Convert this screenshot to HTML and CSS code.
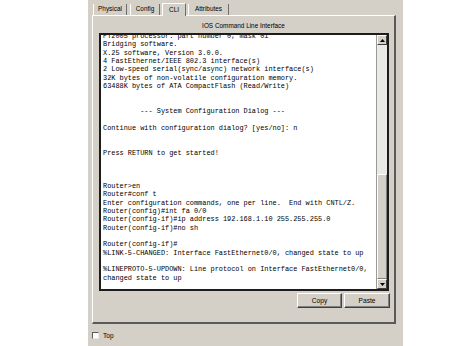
FILE: index.html
```html
<!DOCTYPE html>
<html>
<head>
<meta charset="utf-8">
<link rel="stylesheet" href="styles.css">
</head>
<body>
<div class="window">
  <div class="tabs">
    <div class="tab tab-physical">Physical</div>
    <div class="tab tab-config">Config</div>
    <div class="tab tab-cli active">CLI</div>
    <div class="tab tab-attr">Attributes</div>
  </div>
  <div class="panel">
    <div class="title">IOS Command Line Interface</div>
    <div class="terminal">
      <div class="screen"><pre class="text">PT2005 processor: part number 0, mask 01
Bridging software.
X.25 software, Version 3.0.0.
4 FastEthernet/IEEE 802.3 interface(s)
2 Low-speed serial(sync/async) network interface(s)
32K bytes of non-volatile configuration memory.
63488K bytes of ATA CompactFlash (Read/Write)


         --- System Configuration Dialog ---

Continue with configuration dialog? [yes/no]: n


Press RETURN to get started!



Router&gt;en
Router#conf t
Enter configuration commands, one per line.  End with CNTL/Z.
Router(config)#int fa 0/0
Router(config-if)#ip address 192.168.1.10 255.255.255.0
Router(config-if)#no sh

Router(config-if)#
%LINK-5-CHANGED: Interface FastEthernet0/0, changed state to up

%LINEPROTO-5-UPDOWN: Line protocol on Interface FastEthernet0/0,
changed state to up</pre></div>
      <div class="scrollbar">
        <div class="sb-btn"><svg width="5" height="3" viewBox="0 0 5 3"><polygon points="2.5,0 5,3 0,3" fill="#000"/></svg></div>
        <div class="track"><div class="thumb"></div></div>
        <div class="sb-btn"><svg width="5" height="3" viewBox="0 0 5 3"><polygon points="0,0 5,0 2.5,3" fill="#000"/></svg></div>
      </div>
    </div>
    <div class="actions">
      <div class="btn btn-copy">Copy</div>
      <div class="btn btn-paste">Paste</div>
    </div>
  </div>
  <div class="footer">
    <span class="checkbox"></span>
    <span class="label">Top</span>
  </div>
</div>
</body>
</html>
```
FILE: styles.css
```css
html, body {
  margin: 0;
  padding: 0;
  background: #ffffff;
}
body {
  font-family: "Liberation Sans", Arial, sans-serif;
  font-size: 6.4px;
  color: #000;
}
.window {
  margin-left: 88px;
  width: 315px;
  height: 346px;
  background: #d4d0c8;
  display: flex;
  flex-direction: column;
}
.tabs {
  height: 15px;
  display: flex;
  align-items: flex-end;
  padding-left: 5px;
  gap: 2px;
  box-sizing: border-box;
}
.tab {
  height: 11px;
  box-sizing: border-box;
  border-left: 1px solid #ffffff;
  border-right: 1px solid #6e6e6e;
  display: flex;
  align-items: center;
  justify-content: center;
  line-height: 1;
}
.tab-physical { width: 34px; }
.tab-config { width: 30px; margin-left: 1px; }
.tab-cli { width: 24px; }
.tab-attr { width: 41px; }
.tab.active {
  height: 13px;
  border-top: 1px solid #ffffff;
  position: relative;
  top: 1px;
  background: #d4d0c8;
  z-index: 1;
}
.panel {
  margin-left: 4px;
  width: 304px;
  height: 309px;
  box-sizing: border-box;
  border-top: 1px solid #ffffff;
  border-left: 1px solid #ffffff;
  border-right: 2px solid #5a5a5a;
  border-bottom: 2px solid #5a5a5a;
  display: flex;
  flex-direction: column;
}
.title {
  height: 15px;
  padding-top: 2px;
  line-height: 15px;
  text-align: center;
}
.terminal {
  margin: 0 5px 0 6px;
  height: 258px;
  box-sizing: border-box;
  border: 2px solid #1c1c1c;
  background: #ffffff;
  display: flex;
}
.screen {
  flex: 1;
  overflow: hidden;
  display: flex;
  flex-direction: column;
  justify-content: flex-end;
  padding: 0 0 7px 2px;
}
.text {
  margin: 0;
  font-family: "Liberation Mono", "Courier New", monospace;
  font-size: 6.9px;
  line-height: 8.33px;
  color: #000;
  white-space: pre;
}
.scrollbar {
  width: 10px;
  display: flex;
  flex-direction: column;
  background: #ebe9e5;
  border-left: 1px solid #9a9a9a;
}
.sb-btn {
  height: 10px;
  box-sizing: border-box;
  background: #d4d0c8;
  border-top: 1px solid #ffffff;
  border-left: 1px solid #ffffff;
  border-right: 1px solid #404040;
  border-bottom: 1px solid #404040;
  display: flex;
  align-items: center;
  justify-content: center;
}
.sb-btn svg { display: block; }
.track {
  flex: 1;
  display: flex;
  flex-direction: column;
  justify-content: flex-end;
}
.thumb {
  height: 105px;
  box-sizing: border-box;
  background: #d4d0c8;
  border-top: 1px solid #ffffff;
  border-left: 1px solid #ffffff;
  border-right: 1px solid #808080;
  border-bottom: 1px solid #808080;
}
.actions {
  margin-top: 2px;
  height: 15px;
  display: flex;
  justify-content: flex-end;
  gap: 2px;
  padding-right: 4px;
}
.btn {
  height: 15px;
  box-sizing: border-box;
  background: #d4d0c8;
  border-top: 1px solid #ffffff;
  border-left: 1px solid #ffffff;
  border-right: 1px solid #404040;
  border-bottom: 1px solid #404040;
  box-shadow: inset -1px -1px 0 #808080;
  display: flex;
  align-items: center;
  justify-content: center;
  font-size: 6.6px;
}
.btn-copy { width: 45px; }
.btn-paste { width: 46px; }
.footer {
  flex: 1;
  display: flex;
  align-items: center;
  padding-left: 4px;
  gap: 4px;
}
.checkbox {
  width: 7px;
  height: 7px;
  box-sizing: border-box;
  background: #ffffff;
  border-top: 1px solid #5a5a5a;
  border-left: 1px solid #5a5a5a;
  border-right: 1px solid #e8e8e8;
  border-bottom: 1px solid #e8e8e8;
}
.label {
  font-size: 6.6px;
}
```
